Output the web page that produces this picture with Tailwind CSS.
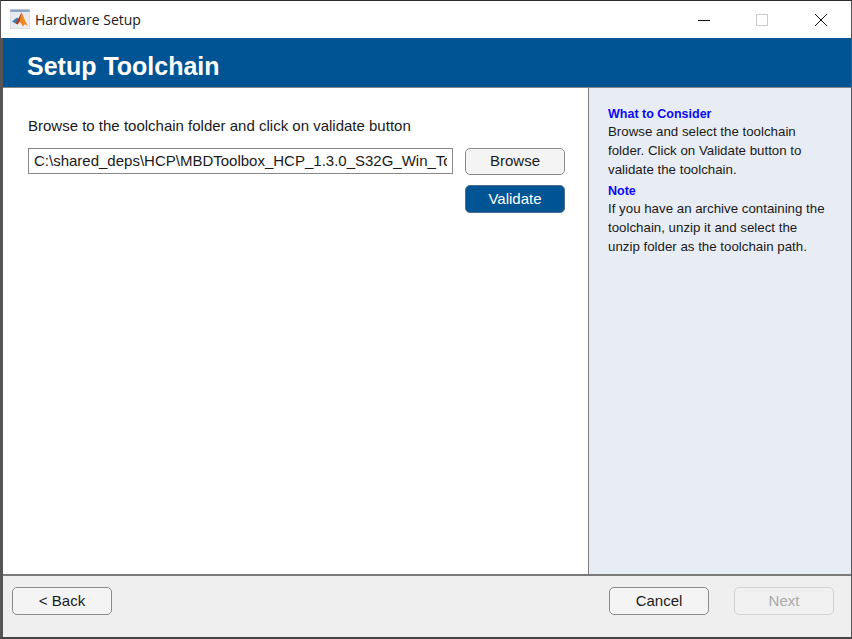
<!DOCTYPE html>
<html lang="en">
  <head>
    <meta charset="UTF-8" />
    <title>Hardware Setup</title>
    <script src="https://cdn.jsdelivr.net/npm/@tailwindcss/browser@4"></script>
  </head>
  <body class="w-[852px] h-[639px] overflow-hidden bg-white font-['Liberation_Sans',sans-serif] text-[#1a1a1a]">
    <div class="flex flex-col w-full h-full border-t border-t-[#2b2b2b] border-r border-r-[#555] border-b-2 border-b-[#444] border-l border-l-[#555]">

      <!-- Title bar -->
      <div class="flex items-center h-[37px] shrink-0 bg-white">
        <svg class="ml-[9px] w-5 h-5 -mt-px" viewBox="0 0 20 20">
          <rect x="0" y="0" width="20" height="20" fill="#e9ebef" stroke="#b4b8bf" stroke-width="0.5" />
          <rect x="0.5" y="0.5" width="19" height="2.5" fill="#8ea4c4" />
          <path d="M2 12.5 L7 8.5 L9 10.5 L5.5 14.5 Z" fill="#3f7fb3" />
          <path d="M5.5 14.5 L9 8.5 L11.5 3.5 L13 7 L9.5 13 L7.5 15.5 Z" fill="#a8391f" />
          <path d="M11.5 3.5 C13 6 15 12 18 17 C15.5 15 14.5 14.5 13 17.5 C11.5 15 10.5 13.5 9.5 13 Z" fill="#ef8a22" />
        </svg>
        <span class="ml-[5px] text-[14px] text-[#1a1a1a] font-['Open_Sans',sans-serif]">Hardware Setup</span>
        <div class="ml-auto flex items-center">
          <svg class="w-3 h-3 mr-[46px]" viewBox="0 0 12 12"><path d="M0 6.5H12" stroke="#111" stroke-width="1" /></svg>
          <svg class="w-3 h-3 mr-[47px]" viewBox="0 0 12 12"><rect x="0.5" y="0.5" width="11" height="11" fill="none" stroke="#ccc" /></svg>
          <svg class="w-3 h-3 mr-[24px]" viewBox="0 0 12 12"><path d="M0 0L12 12M12 0L0 12" stroke="#111" stroke-width="1" /></svg>
        </div>
      </div>

      <div class="flex flex-col flex-1 min-h-0 border-l-2 border-l-[#555]">
        <!-- Banner -->
        <div class="flex items-center h-[49px] shrink-0 bg-[#015493] pl-[24px] pt-[8px]">
          <h1 class="text-[25px] font-bold text-white">Setup Toolchain</h1>
        </div>

        <!-- Main -->
        <div class="flex flex-1 min-h-0 border-t border-t-[#7f8487]">
          <div class="w-[585px] shrink-0 bg-white pt-[30px] pl-[25px]">
            <p class="text-[15px] leading-4">Browse to the toolchain folder and click on validate button</p>
            <div class="flex mt-[14px]">
              <div class="w-[425px] h-[26px] pl-[5px] pr-[5px] border border-[#888] text-[15px] leading-[24px]">
                <div class="overflow-hidden whitespace-nowrap">C:\shared_deps\HCP\MBDToolbox_HCP_1.3.0_S32G_Win_Toolchain</div>
              </div>
              <div class="flex flex-col gap-[10px] ml-[12px]">
                <button class="w-[100px] h-[27px] rounded-[5px] border border-[#8a8a8a] bg-[#f4f4f4] text-[15px]">Browse</button>
                <button class="w-[100px] h-[28px] rounded-[5px] border border-[#4a6f8f] bg-[#015493] text-[15px] text-white">Validate</button>
              </div>
            </div>
          </div>
          <div class="flex-1 bg-[#e8ecf4] border-l border-l-[#7d7d7d] pt-[19px] pl-[19px] text-[13.3px] leading-[19px]">
            <h2 class="font-bold text-[12.5px] text-[#0a0af5] leading-[14px]">What to Consider</h2>
            <p class="w-[222px] mt-[1px]">Browse and select the toolchain folder. Click on Validate button to validate the toolchain.</p>
            <h2 class="font-bold text-[12.5px] text-[#0a0af5] leading-[14px] mt-[5px]">Note</h2>
            <p class="w-[222px] mt-[1px]">If you have an archive containing the toolchain, unzip it and select the unzip folder as the toolchain path.</p>
          </div>
        </div>

        <!-- Footer -->
        <div class="flex items-start justify-between h-[63px] shrink-0 bg-[#efefef] border-t-2 border-t-[#7a7a7a] pt-[11px] pl-[9px] pr-[17px]">
          <button class="w-[100px] h-[28px] rounded-[5px] border border-[#8a8a8a] bg-[#f4f4f4] text-[15px]">&lt; Back</button>
          <div class="flex gap-[25px]">
            <button class="w-[100px] h-[28px] rounded-[5px] border border-[#8a8a8a] bg-[#f4f4f4] text-[15px]">Cancel</button>
            <button class="w-[100px] h-[28px] rounded-[5px] border border-[#d2d2d2] bg-[#f0f0f0] text-[15px] text-[#aaa]">Next</button>
          </div>
        </div>
      </div>
    </div>
  </body>
</html>
